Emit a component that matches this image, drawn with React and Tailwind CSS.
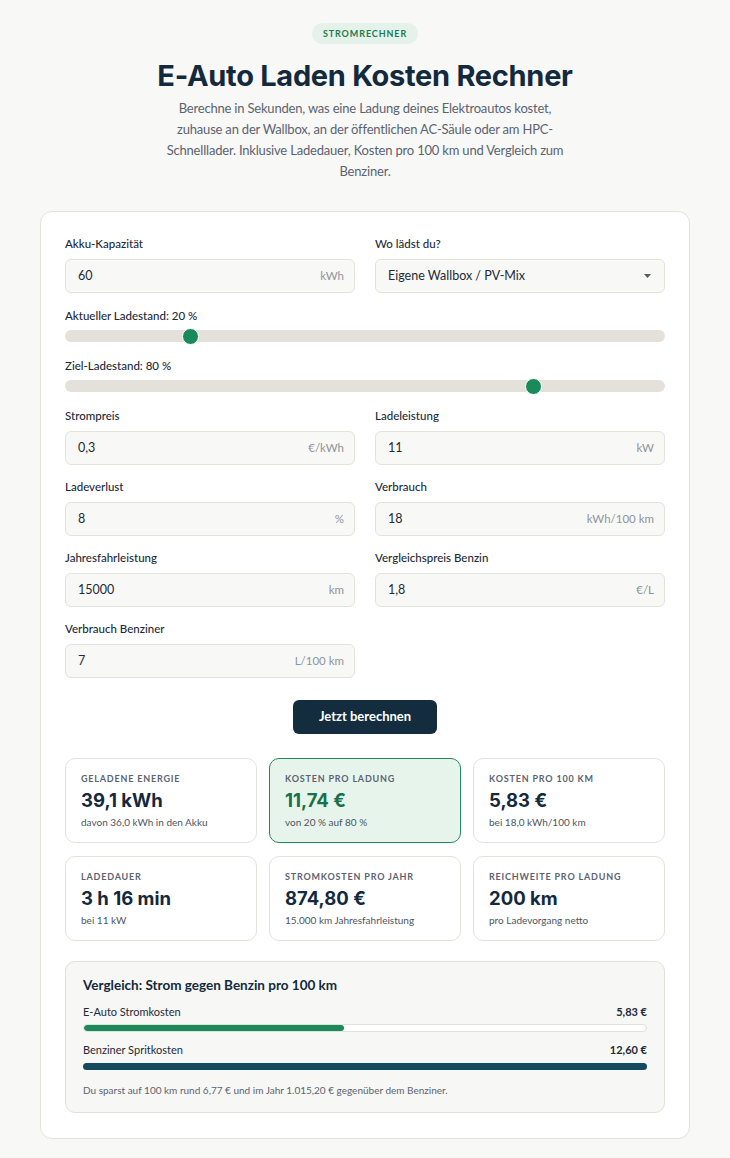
import { useState } from 'react';

const body = { fontFamily: 'Lato, "Liberation Sans", sans-serif' };
const head = { fontFamily: 'Inter, "Liberation Sans", sans-serif' };

function Field({ label, value, unit }) {
  return (
    <div>
      <label className="block text-[11.5px] leading-4 font-medium text-[#1d2a38] mb-[7px]">{label}</label>
      <div className="flex items-center h-[34px] rounded-md border border-[#e4e2db] bg-[#f8f8f6] pl-3 pr-[10px]">
        <input
          defaultValue={value}
          className="flex-1 min-w-0 bg-transparent outline-none text-[12.5px] text-[#1d2a38]"
        />
        <span className="text-[11.5px] text-[#8f949c]">{unit}</span>
      </div>
    </div>
  );
}

function Slider({ label, value, min }) {
  const [v, setV] = useState(value);
  return (
    <div>
      <label className="block text-[11.5px] leading-4 font-medium text-[#1d2a38] mb-[6px]">
        {label}: {v} %
      </label>
      <input
        type="range"
        min={min}
        max={100}
        value={v}
        onChange={(e) => setV(Number(e.target.value))}
        className="block w-full h-3 rounded-full bg-[#e4e1da] appearance-none outline-none [&::-webkit-slider-thumb]:appearance-none [&::-webkit-slider-thumb]:w-[17px] [&::-webkit-slider-thumb]:h-[17px] [&::-webkit-slider-thumb]:rounded-full [&::-webkit-slider-thumb]:bg-[#1b8a5a] [&::-webkit-slider-thumb]:border [&::-webkit-slider-thumb]:border-white"
      />
    </div>
  );
}

function Stat({ label, value, sub, active }) {
  return (
    <div
      className={
        active
          ? 'rounded-[10px] border border-[#1f8a5a] bg-[#e7f4ec] px-[15px] pt-[14px] pb-[12px]'
          : 'rounded-[10px] border border-[#e4e2db] bg-white px-[15px] pt-[14px] pb-[12px]'
      }
    >
      <div className="text-[9px] leading-3 font-bold uppercase tracking-[0.09em] text-[#5c6371]">{label}</div>
      <div
        style={head}
        className={active ? 'mt-[3px] text-[18.5px] leading-6 font-bold text-[#17714a]' : 'mt-[3px] text-[18.5px] leading-6 font-bold text-[#13293d]'}
      >
        {value}
      </div>
      <div className="mt-[2px] text-[10px] leading-4 text-[#4d5562]">{sub}</div>
    </div>
  );
}

export default function App() {
  return (
    <div style={body} className="min-h-screen bg-[#f8f8f7] px-10 pt-[23px] pb-5">
      <div className="flex flex-col items-center text-center">
        <span className="inline-flex items-center h-[21px] px-[11px] rounded-full bg-[#e4f2ea] text-[9px] font-bold tracking-[0.1em] text-[#1d7a4e]">
          STROMRECHNER
        </span>
        <h1 style={head} className="mt-[14px] text-[29px] leading-9 font-bold tracking-[-0.01em] text-[#13293d]">
          E-Auto Laden Kosten Rechner
        </h1>
        <p className="mt-1 max-w-[420px] text-[13px] leading-[21px] tracking-[-0.015em] text-[#5b6371]">
          Berechne in Sekunden, was eine Ladung deines Elektroautos kostet, zuhause an der Wallbox, an der öffentlichen AC-Säule oder am HPC-Schnelllader. Inklusive Ladedauer, Kosten pro 100 km und Vergleich zum Benziner.
        </p>
      </div>

      <div className="mt-[29px] rounded-xl border border-[#e4e2db] bg-white px-6 pt-6 pb-[25px]">
        <div className="grid grid-cols-2 gap-x-5">
          <Field label="Akku-Kapazität" value="60" unit="kWh" />
          <div>
            <label className="block text-[11.5px] leading-4 font-medium text-[#1d2a38] mb-[7px]">Wo lädst du?</label>
            <div className="flex items-center justify-between h-[34px] rounded-md border border-[#e4e2db] bg-[#f8f8f6] pl-3 pr-[13px]">
              <span className="text-[12.5px] text-[#1d2a38]">Eigene Wallbox / PV-Mix</span>
              <svg width="7" height="4" viewBox="0 0 7 4">
                <path d="M0 0h7L3.5 4z" fill="#555b63" />
              </svg>
            </div>
          </div>
        </div>

        <div className="mt-[15px] flex flex-col gap-4">
          <Slider label="Aktueller Ladestand" value={20} min={0} />
          <Slider label="Ziel-Ladestand" value={80} min={5} />
        </div>

        <div className="mt-4 grid grid-cols-2 gap-x-5 gap-y-[14px]">
          <Field label="Strompreis" value="0,3" unit="€/kWh" />
          <Field label="Ladeleistung" value="11" unit="kW" />
          <Field label="Ladeverlust" value="8" unit="%" />
          <Field label="Verbrauch" value="18" unit="kWh/100 km" />
          <Field label="Jahresfahrleistung" value="15000" unit="km" />
          <Field label="Vergleichspreis Benzin" value="1,8" unit="€/L" />
          <Field label="Verbrauch Benziner" value="7" unit="L/100 km" />
        </div>

        <div className="mt-[22px] flex justify-center">
          <button className="h-[34px] w-[144px] rounded-md bg-[#132d3f] text-[13px] font-bold text-white">
            Jetzt berechnen
          </button>
        </div>

        <div className="mt-[24px] grid grid-cols-3 gap-x-3 gap-y-[13px]">
          <Stat label="Geladene Energie" value="39,1 kWh" sub="davon 36,0 kWh in den Akku" />
          <Stat label="Kosten pro Ladung" value="11,74 €" sub="von 20 % auf 80 %" active />
          <Stat label="Kosten pro 100 km" value="5,83 €" sub="bei 18,0 kWh/100 km" />
          <Stat label="Ladedauer" value="3 h 16 min" sub="bei 11 kW" />
          <Stat label="Stromkosten pro Jahr" value="874,80 €" sub="15.000 km Jahresfahrleistung" />
          <Stat label="Reichweite pro Ladung" value="200 km" sub="pro Ladevorgang netto" />
        </div>

        <div className="mt-5 rounded-[10px] border border-[#e2e0da] bg-[#f7f7f5] px-[17px] pt-[13px] pb-[15px]">
          <h2 className="text-[13.5px] leading-5 font-bold text-[#13293d]">Vergleich: Strom gegen Benzin pro 100 km</h2>
          <div className="mt-[9px] flex justify-between text-[11px] leading-4 text-[#1d2a38]">
            <span>E-Auto Stromkosten</span>
            <span className="font-bold">5,83 €</span>
          </div>
          <div className="mt-1 h-2 rounded-full border border-[#e2e0da] bg-white overflow-hidden">
            <div className="h-full rounded-full bg-[#1b8a5a]" style={{ width: `${(5.83 / 12.6) * 100}%` }} />
          </div>
          <div className="mt-[10px] flex justify-between text-[11px] leading-4 text-[#1d2a38]">
            <span>Benziner Spritkosten</span>
            <span className="font-bold">12,60 €</span>
          </div>
          <div className="mt-[5px] h-[7px] rounded-full bg-[#164a5e]" />
          <p className="mt-[13px] text-[10px] leading-[14px] text-[#5b6371]">
            Du sparst auf 100 km rund 6,77 € und im Jahr 1.015,20 € gegenüber dem Benziner.
          </p>
        </div>
      </div>
    </div>
  );
}
